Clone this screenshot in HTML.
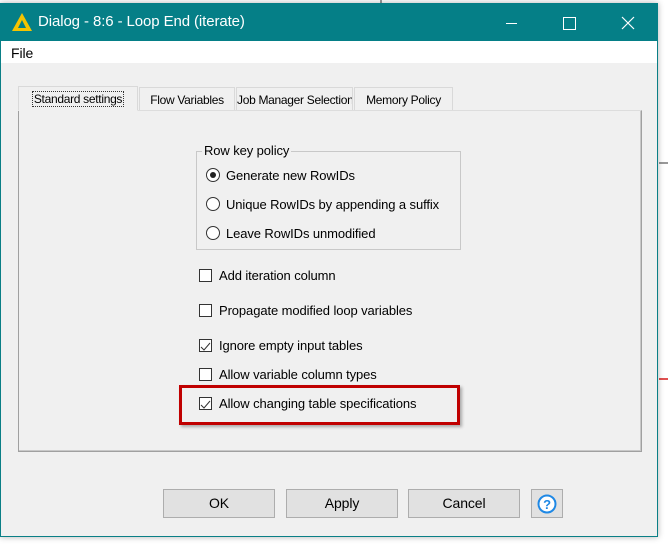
<!DOCTYPE html>
<html><head><style>
body{margin:0;width:668px;height:547px;background:#fff;position:relative;overflow:hidden;font-family:"Liberation Sans",sans-serif;font-size:13px;color:#000;letter-spacing:-0.1px}
.a{position:absolute}
.win{left:0;top:3px;width:658px;height:534px;background:#f0f0f0;border:1px solid #0a7f86;box-sizing:border-box;box-shadow:0 0 6px rgba(0,0,0,.3)}
.title{left:0;top:3px;width:658px;height:38px;background:#057f87;color:#fff;font-size:15px}
.menu{left:1px;top:41px;width:656px;height:22px;background:#fff}
.tab{top:87px;height:23px;border:1px solid #d9d9d9;border-bottom:none;box-sizing:border-box;padding:5px 0 0;text-align:center;background:#f0f0f0;font-size:12px;letter-spacing:-0.3px;white-space:nowrap;overflow:hidden}
.cb{width:13px;height:13px;border:1px solid #333;background:#fff;box-sizing:border-box}
.rb{width:14px;height:14px;border:1px solid #333;border-radius:50%;background:#fff;box-sizing:border-box}
.btn{top:489px;height:29px;border:1px solid #adadad;background:#e1e1e1;box-sizing:border-box;text-align:center;line-height:27px;font-size:14px}
</style></head><body>
<div class="a" style="left:380px;top:0;width:2px;height:3px;background:#999"></div>
<div class="a" style="left:659px;top:162px;width:9px;height:2px;background:#999"></div>
<div class="a" style="left:659px;top:378px;width:9px;height:2px;background:#e05050"></div>
<div class="a win"></div>
<div class="a title">
<svg class="a" style="left:11px;top:9px" width="22" height="20"><polygon points="11,1 21,19 1,19" fill="#f5c400"/><polygon points="11,8 15,16 7,16" fill="#057f87"/></svg>
<span class="a" style="left:38px;top:10px">Dialog - 8:6 - Loop End (iterate)</span>
<div class="a" style="left:506px;top:20px;width:11px;height:1px;background:#fff"></div>
<div class="a" style="left:563px;top:14px;width:11px;height:11px;border:1px solid #fff"></div>
<svg class="a" style="left:621px;top:13px" width="14" height="14"><path d="M1 1L13 13M13 1L1 13" stroke="#fff" stroke-width="1.2"/></svg>
</div>
<div class="a menu"><span class="a" style="left:10px;top:4px;font-size:14px">File</span></div>
<div class="a" style="left:18px;top:110px;width:624px;height:342px;border:1px solid #a0a0a0;border-top:1px solid #ddd;box-sizing:border-box;box-shadow:inset -1px -1px 0 #c8c8c8"></div>
<div class="a tab" style="left:18px;top:86px;width:120px;height:25px;background:#f0f0f0;border-bottom:1px solid #f0f0f0;padding-top:5px"><span style="outline:1px dotted #333;padding:0 1px">Standard settings</span></div>
<div class="a tab" style="left:139px;width:96px">Flow Variables</div>
<div class="a tab" style="left:236px;width:117px">Job Manager Selection</div>
<div class="a tab" style="left:354px;width:99px">Memory Policy</div>
<div class="a" style="left:196px;top:151px;width:265px;height:99px;border:1px solid #c8c8c8;box-sizing:border-box"></div>
<span class="a" style="left:202px;top:143px;background:#f0f0f0;padding:0 2px">Row key policy</span>
<div class="a rb" style="left:206px;top:168px"><div class="a" style="left:3px;top:3px;width:6px;height:6px;border-radius:50%;background:#222"></div></div>
<span class="a" style="left:226px;top:168px">Generate new RowIDs</span>
<div class="a rb" style="left:206px;top:197px"></div>
<span class="a" style="left:226px;top:197px">Unique RowIDs by appending a suffix</span>
<div class="a rb" style="left:206px;top:226px"></div>
<span class="a" style="left:226px;top:226px">Leave RowIDs unmodified</span>
<div class="a cb" style="left:199px;top:269px"></div><span class="a" style="left:219px;top:268px">Add iteration column</span>
<div class="a cb" style="left:199px;top:304px"></div><span class="a" style="left:219px;top:303px">Propagate modified loop variables</span>
<div class="a cb" style="left:199px;top:339px"><svg width="11" height="11"><path d="M1 6L4 9L10 2" stroke="#333" fill="none"/></svg></div><span class="a" style="left:219px;top:338px">Ignore empty input tables</span>
<div class="a cb" style="left:199px;top:368px"></div><span class="a" style="left:219px;top:367px">Allow variable column types</span>
<div class="a" style="left:179px;top:385px;width:281px;height:40px;border:3px solid #c00000;box-sizing:border-box;box-shadow:2px 2px 3px rgba(0,0,0,.3)"></div>
<div class="a cb" style="left:199px;top:397px"><svg width="11" height="11"><path d="M1 6L4 9L10 2" stroke="#333" fill="none"/></svg></div><span class="a" style="left:219px;top:396px">Allow changing table specifications</span>
<div class="a btn" style="left:163px;width:112px">OK</div>
<div class="a btn" style="left:286px;width:112px">Apply</div>
<div class="a btn" style="left:408px;width:112px">Cancel</div>
<div class="a btn" style="left:531px;width:32px"><svg style="margin-top:4px" width="20" height="20"><circle cx="10" cy="10" r="8.5" fill="#fff" stroke="#1e88e5" stroke-width="2"/><text x="10" y="15" text-anchor="middle" font-family="Liberation Sans" font-weight="bold" font-size="13" fill="#1e88e5">?</text></svg></div>
</body></html>
